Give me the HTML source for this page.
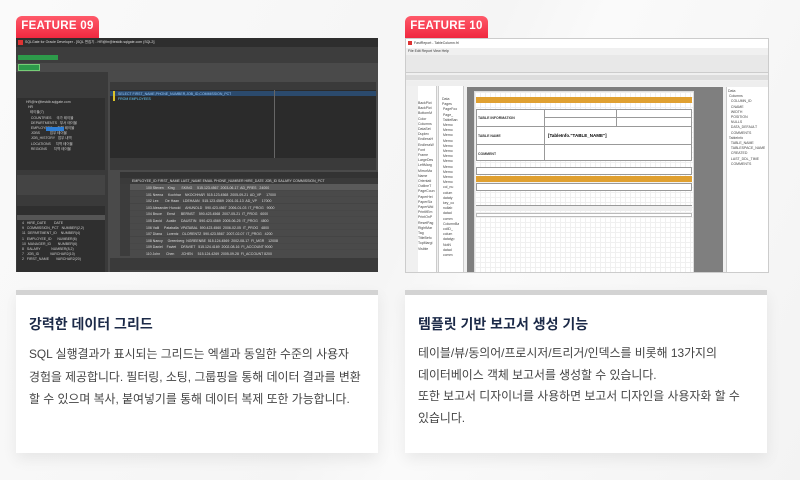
<!DOCTYPE html>
<html><head><meta charset="utf-8"><style>
*{margin:0;padding:0;box-sizing:border-box}
body{width:800px;height:480px;overflow:hidden;background:#f7f7f7;font-family:"Liberation Sans","Noto Sans CJK KR",sans-serif;position:relative}
.bg{position:absolute;left:0;top:0;width:800px;height:480px;background:linear-gradient(115deg,#fafafa 0%,#f5f5f5 50%,#fafafa 60%,#f3f3f3 100%)}
.abs{position:absolute}
.badge{position:absolute;height:22px;background:linear-gradient(#ff5a6a,#f0283f);color:#fff;font-weight:bold;font-size:11.5px;letter-spacing:.3px;line-height:21px;text-align:center;border-radius:6px 6px 0 0}
.card{position:absolute;top:290px;height:163px;background:#fff;border-top:5px solid #d3d3d3;box-shadow:0 6px 14px rgba(0,0,0,.07)}
.card h3{position:absolute;left:13px;top:19px;font-size:14px;color:#1c2a48;font-weight:bold}
.card p{position:absolute;left:13px;top:48px;font-size:11.9px;line-height:22.5px;color:#444;white-space:nowrap}
.t{font-size:3.5px;color:#ddd;white-space:nowrap;overflow:hidden}
.lst{font-size:3.5px;line-height:5.2px;color:#444;white-space:pre;overflow:hidden}
</style></head><body>
<div class="bg"></div>

<!-- LEFT -->
<div class="badge" style="left:16px;top:16px;width:83px">FEATURE 09</div>
<div class="abs" style="left:16px;top:38px;width:362px;height:234px;background:#4a4a4a;overflow:hidden">
  <div class="abs" style="left:0;top:0;width:362px;height:9px;background:#2e2e2e"></div>
  <div class="abs" style="left:2px;top:2px;width:5px;height:5px;background:#d33"></div>
  <div class="abs t" style="left:9px;top:2px">SQLGate for Oracle Developer - [SQL 편집기 - HR@hr@testdb.sqlgate.com (SQL2)]</div>
  <div class="abs" style="left:0;top:9px;width:362px;height:16px;background:#3d3d3d"></div>
  <div class="abs" style="left:2px;top:17px;width:40px;height:5px;background:#2d9a4a"></div>
  <div class="abs" style="left:2px;top:26px;width:22px;height:7px;background:#2d9a4a;border:1px solid #7c7"></div>
  <div class="abs" style="left:0;top:34px;width:92px;height:222px;background:#3a3a3a"></div>
  <div class="abs" style="left:1px;top:60px;width:88px;height:72px;background:#2f2f2f"></div>
  <div class="abs lst" style="left:10px;top:62px;color:#ccc">HR@hr@testdb.sqlgate.com
  HR
    테이블(7)
     COUNTRIES     국가 테이블
     DEPARTMENTS   부서 테이블
     EMPLOYEES     직원 테이블
     JOBS          업무 테이블
     JOB_HISTORY   업무 내역
     LOCATIONS     지역 테이블
     REGIONS       지역 테이블</div>
  <div class="abs" style="left:30px;top:89px;width:18px;height:4px;background:#2f7fd6"></div>
  <div class="abs" style="left:1px;top:137px;width:88px;height:20px;background:#444"></div>
  <div class="abs" style="left:1px;top:168px;width:88px;height:85px;background:#2f2f2f"></div>
  <div class="abs" style="left:1px;top:177px;width:88px;height:5px;background:#555"></div>
  <div class="abs lst" style="left:6px;top:183px;color:#ccc">4   HIRE_DATE        DATE
9   COMMISSION_PCT   NUMBER(2,2)
11  DEPARTMENT_ID    NUMBER(4)
1   EMPLOYEE_ID      NUMBER(6)
10  MANAGER_ID       NUMBER(6)
8   SALARY           NUMBER(8,2)
7   JOB_ID           VARCHAR2(10)
2   FIRST_NAME       VARCHAR2(20)</div>
  <div class="abs" style="left:94px;top:52px;width:266px;height:68px;background:#2b2b2b"></div>
  <div class="abs" style="left:94px;top:53px;width:266px;height:5px;background:#2b4a6d"></div>
  <div class="abs t" style="left:102px;top:54px;color:#9cf">SELECT FIRST_NAME,PHONE_NUMBER,JOB_ID,COMMISSION_PCT</div>
  <div class="abs t" style="left:102px;top:59px;color:#6cf">FROM EMPLOYEES</div>
  <div class="abs" style="left:97px;top:53px;width:2px;height:10px;background:#d9c32b"></div>
  <div class="abs" style="left:258px;top:52px;width:1px;height:68px;background:#666"></div>
  <div class="abs" style="left:94px;top:44px;width:266px;height:8px;background:#3a3a3a"></div>
  <div class="abs" style="left:94px;top:120px;width:266px;height:12px;background:#3a3a3a"></div>
  <div class="abs" style="left:104px;top:134px;width:258px;height:6px;background:#333"></div>
  <div class="abs" style="left:104px;top:140px;width:258px;height:6px;background:#3a3a3a"></div>
  <div class="abs" style="left:104px;top:146px;width:258px;height:72px;background:repeating-linear-gradient(#4a4a4a 0 6px,#444 6px 6.6px)"></div>
  <div class="abs" style="left:104px;top:146px;width:258px;height:6px;background:#5a5a5a"></div>
  <div class="abs" style="left:104px;top:146px;width:10px;height:72px;background:#3c3c3c"></div>
  <div class="abs t" style="left:116px;top:141px">EMPLOYEE_ID FIRST_NAME LAST_NAME EMAIL PHONE_NUMBER HIRE_DATE JOB_ID SALARY COMMISSION_PCT</div>
  <div class="abs lst" style="left:130px;top:147px;color:#ddd;line-height:6.6px">100 Steven    King       SKING     515.123.4567  2003-06-17  AD_PRES   24000
101 Neena     Kochhar    NKOCHHAR  515.123.4568  2005-09-21  AD_VP     17000
102 Lex       De Haan    LDEHAAN   515.123.4569  2001-01-13  AD_VP     17000
103 Alexander Hunold     AHUNOLD   590.423.4567  2006-01-03  IT_PROG   9000
104 Bruce     Ernst      BERNST    590.423.4568  2007-05-21  IT_PROG   6000
105 David     Austin     DAUSTIN   590.423.4569  2005-06-25  IT_PROG   4800
106 Valli     Pataballa  VPATABAL  590.423.4560  2006-02-05  IT_PROG   4800
107 Diana     Lorentz    DLORENTZ  590.423.5567  2007-02-07  IT_PROG   4200
108 Nancy     Greenberg  NGREENBE  515.124.4569  2002-08-17  FI_MGR    12008
109 Daniel    Faviet     DFAVIET   515.124.4169  2002-08-16  FI_ACCOUNT 9000
110 John      Chen       JCHEN     515.124.4269  2005-09-28  FI_ACCOUNT 8200</div>
  <div class="abs" style="left:94px;top:220px;width:268px;height:36px;background:#3a3a3a"></div>
  <div class="abs" style="left:104px;top:232px;width:150px;height:6px;background:#444"></div>
  <div class="abs" style="left:255px;top:245px;width:42px;height:5px;background:#2d9a4a"></div>
  <div class="abs" style="left:0;top:256px;width:362px;height:8px;background:#333"></div>
  <div class="abs" style="left:88px;top:257px;width:42px;height:5px;background:#2d9a4a"></div>
</div>
<div class="card" style="left:16px;width:362px">
  <h3>강력한 데이터 그리드</h3>
  <p>SQL 실행결과가 표시되는 그리드는 엑셀과 동일한 수준의 사용자<br>경험을 제공합니다. 필터링, 소팅, 그룹핑을 통해 데이터 결과를 변환<br>할 수 있으며 복사, 붙여넣기를 통해 데이터 복제 또한 가능합니다.</p>
</div>

<!-- RIGHT -->
<div class="badge" style="left:405px;top:16px;width:83px">FEATURE 10</div>
<div class="abs" style="left:405px;top:38px;width:364px;height:235px;background:#f0f0f0;border:1px solid #ccc;overflow:hidden">
  <div class="abs" style="left:0;top:0;width:364px;height:9px;background:#fff"></div>
  <div class="abs" style="left:2px;top:2px;width:4px;height:4px;background:#d33"></div>
  <div class="abs t" style="left:8px;top:2px;color:#333">FastReport - TableColumn.frl</div>
  <div class="abs t" style="left:2px;top:10px;color:#333">File  Edit  Report  View  Help</div>
  <div class="abs" style="left:0;top:16px;width:364px;height:18px;background:#e8e8e8;border-bottom:1px solid #ccc"></div>
  <div class="abs" style="left:0;top:36px;width:364px;height:5px;background:#ddd"></div>
  <div class="abs" style="left:1px;top:42px;width:30px;height:195px;background:#fff;border:1px solid #ccc"></div>
  <div class="abs lst" style="left:12px;top:62px">BackPict
BackPict
BottomM
Color
Columns
DataSet
Duplex
EndlessH
EndlessW
Font
Frame
LargeDes
LeftMarg
MirrorMa
Name
Orientati
OutlineT
PageCoun
PaperHei
PaperSiz
PaperWid
PrintIfEm
PrintOnP
ResetPag
RightMar
Tag
TitleBefo
TopMargi
Visible</div>
  <div class="abs" style="left:32px;top:42px;width:26px;height:195px;background:#fff;border:1px solid #ccc"></div>
  <div class="abs lst" style="left:36px;top:58px">Data
Pages
 PageFoo
 Page_
 TableBan
 Memo
 Memo
 Memo
 Memo
 Memo
 Memo
 Memo
 Memo
 Memo
 Memo
 Memo
 Memo
 col_nu
 colum
 dataty
 key_co
 nullab
 datad
 comm
 ColumnBa
 colID_
 colum
 datatyp
 NotN
 datad
 comm</div>
  <div class="abs" style="left:1px;top:42px;width:11px;height:195px;background:#f0f0f0"></div>
  <div class="abs" style="left:0;top:42px;width:364px;height:5px;background:#eee"></div>
  <div class="abs" style="left:61px;top:48px;width:256px;height:190px;background:#7f7f7f"></div>
  <div class="abs" style="left:68px;top:52px;width:220px;height:186px;background:#fff;border:1px solid #ddd;background-image:linear-gradient(#f0f0f0 1px,transparent 1px),linear-gradient(90deg,#f0f0f0 1px,transparent 1px);background-size:5px 5px"></div>
  <div class="abs" style="left:70px;top:58px;width:216px;height:6px;background:#e0a030"></div>
  <div class="abs" style="left:70px;top:70px;width:216px;height:52px;background:#fff;border:1px solid #999"></div>
  <div class="abs" style="left:70px;top:87px;width:216px;height:1px;background:#999"></div>
  <div class="abs" style="left:70px;top:105px;width:216px;height:1px;background:#999"></div>
  <div class="abs" style="left:138px;top:70px;width:1px;height:52px;background:#999"></div>
  <div class="abs" style="left:210px;top:70px;width:1px;height:17px;background:#999"></div>
  <div class="abs" style="left:138px;top:78px;width:148px;height:1px;background:#999"></div>
  <div class="abs t" style="left:72px;top:77px;color:#333;font-weight:bold">TABLE INFORMATION</div>
  <div class="abs t" style="left:72px;top:95px;color:#333;font-weight:bold">TABLE NAME</div>
  <div class="abs t" style="left:72px;top:113px;color:#333;font-weight:bold">COMMENT</div>
  <div class="abs t" style="left:142px;top:94px;color:#000;font-size:4.5px;font-weight:bold">[TableInfo."TABLE_NAME"]</div>
  <div class="abs" style="left:70px;top:128px;width:216px;height:8px;background:#fff;border:1px solid #999"></div>
  <div class="abs" style="left:70px;top:137px;width:216px;height:6px;background:#e0a030"></div>
  <div class="abs" style="left:70px;top:144px;width:216px;height:8px;background:#fff;border:1px solid #999"></div>
  <div class="abs" style="left:70px;top:166px;width:216px;height:6px;background:#eee;border-top:1px solid #999"></div>
  <div class="abs" style="left:70px;top:174px;width:216px;height:4px;background:#fff;border:1px solid #bbb"></div>
  <div class="abs" style="left:320px;top:42px;width:44px;height:195px;background:#fff;border:1px solid #ccc"></div>
  <div class="abs" style="left:320px;top:42px;width:44px;height:6px;background:#eee"></div>
  <div class="abs lst" style="left:322px;top:50px">Data
 Columns
   COLUMN_ID
   CNAME
   WIDTH
   POSITION
   NULLS
   DATA_DEFAULT
   COMMENTS
 TableInfo
   TABLE_NAME
   TABLESPACE_NAME
   CREATED
   LAST_DDL_TIME
   COMMENTS</div>
</div>
<div class="card" style="left:405px;width:362px">
  <h3>템플릿 기반 보고서 생성 기능</h3>
  <p style="line-height:21.5px">테이블/뷰/동의어/프로시저/트리거/인덱스를 비롯해 13가지의<br>데이터베이스 객체 보고서를 생성할 수 있습니다.<br>또한 보고서 디자이너를 사용하면 보고서 디자인을 사용자화 할 수<br>있습니다.</p>
</div>
</body></html>
